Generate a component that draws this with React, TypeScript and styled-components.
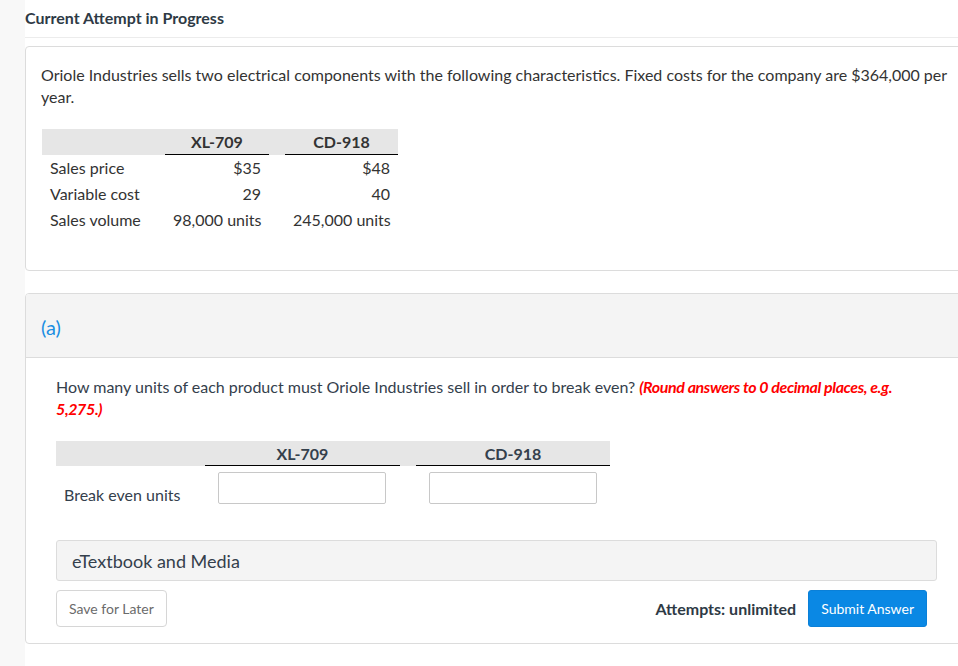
import React from 'react';
import styled, {createGlobalStyle} from 'styled-components';

const GlobalStyle = createGlobalStyle`
  html, body {
    margin: 0;
    padding: 0;
    background: #ffffff;
    overflow: hidden;
  }
  body {
    font-family: 'Lato', 'Liberation Sans', sans-serif;
    color: #333;
  }
`

const Page = styled.div`
  display: flex;
  width: 958px;
  height: 666px;
  overflow: hidden;
`

const Gutter = styled.div`
  flex: 0 0 25px;
  background: #f8f8f8;
`

const Main = styled.main`
  flex: 0 0 943px;
  display: flex;
  flex-direction: column;
`

const Title = styled.h2`
  margin: 0;
  font-size: 16px;
  font-weight: 700;
  color: #2e3a45;
  line-height: 20px;
  padding: 8px 0 9px;
  border-bottom: 1px solid #ececec;
`

const Card = styled.section<{ $top: number }>`
  margin-top: ${p => p.$top}px;
  border: 1px solid #dcdcdc;
  border-radius: 4px;
  background: #fff;
  overflow: hidden;
`

const IntroBody = styled.div`
  padding: 17px 15px 37px 15px;
`

const Paragraph = styled.p<{ $color?: string }>`
  margin: 0;
  font-size: 16px;
  line-height: 22px;
  color: ${p => p.$color || '#333'};
`

const Note = styled.span`
  color: #ff0000;
  font-weight: 700;
  font-style: italic;
  letter-spacing: -0.4px;
`

const DataGrid = styled.div`
  display: grid;
  grid-template-columns: 123px 104px 16px 113px;
  margin: 21px 0 0 1px;
  font-size: 16px;
  color: #333;
`

const HeadCell = styled.div<{ $line?: boolean }>`
  background: #e6e6e6;
  height: 26px;
  line-height: 26px;
  text-align: center;
  font-weight: 700;
  box-sizing: border-box;
  border-bottom: 1px solid ${p => (p.$line ? '#000' : 'transparent')};
`

const Cell = styled.div<{ $align?: string }>`
  height: 26px;
  line-height: 26px;
  padding: 0 8px;
  text-align: ${p => p.$align || 'left'};
  white-space: nowrap;
`

const PartHeader = styled.div`
  background: #f4f4f4;
  height: 64px;
  border-bottom: 1px solid #dcdcdc;
  display: flex;
  align-items: center;
  padding-left: 15px;
  padding-top: 2px;
  box-sizing: border-box;
`

const PartLabel = styled.span`
  font-size: 20px;
  color: #1a8ee2;
`

const PartBody = styled.div`
  padding: 18px 30px 16px 30px;
`

const AnswerGrid = styled.div`
  display: grid;
  grid-template-columns: 149px 195px 16px 194px;
  margin-top: 21px;
  font-size: 16px;
  color: #34404c;
`

const AnswerHead = styled(HeadCell)`
  height: 25px;
  line-height: 25px;
  color: #34404c;
`

const LabelCell = styled.div`
  padding: 19px 8px 0;
  font-size: 16px;
  line-height: 20px;
  height: 40px;
  box-sizing: border-box;
`

const InputCell = styled.div`
  padding: 6px 13px 0;
`

const AnswerInput = styled.input`
  display: block;
  width: 168px;
  height: 32px;
  box-sizing: border-box;
  border: 1px solid #c8c8c8;
  border-radius: 2px;
  font-family: inherit;
  font-size: 15px;
`

const MediaBar = styled.div`
  margin-top: 34px;
  height: 41px;
  box-sizing: border-box;
  background: #f4f4f4;
  border: 1px solid #dcdcdc;
  border-radius: 3px;
  display: flex;
  align-items: center;
  padding-left: 15px;
  font-size: 18px;
  color: #34404c;
`

const Footer = styled.div`
  margin-top: 9px;
  display: flex;
  align-items: center;
  padding-right: 10px;
`

const GhostButton = styled.button`
  height: 37px;
  padding: 0 12px;
  background: #fff;
  border: 1px solid #d6d6d6;
  border-radius: 4px;
  font-family: inherit;
  font-size: 14px;
  color: #6b6b6b;
`

const Attempts = styled.span`
  margin-left: auto;
  margin-right: 12px;
  font-size: 16px;
  font-weight: 700;
  color: #2e3a45;
`

const PrimaryButton = styled.button`
  height: 37px;
  padding: 0 12px;
  background: #0a88e4;
  border: 1px solid #0a80d8;
  border-radius: 3px;
  font-family: inherit;
  font-size: 14px;
  color: #fff;
`

export default function App() {
    return (
        <>
            <GlobalStyle/>
            <Page>
                <Gutter/>
                <Main>
                    <Title>Current Attempt in Progress</Title>

                    <Card $top={8}>
                        <IntroBody>
                            <Paragraph>
                                Oriole Industries sells two electrical components with the following characteristics. Fixed costs for the company are $364,000 per year.
                            </Paragraph>
                            <DataGrid>
                                <HeadCell/>
                                <HeadCell $line>XL-709</HeadCell>
                                <HeadCell/>
                                <HeadCell $line>CD-918</HeadCell>

                                <Cell>Sales price</Cell>
                                <Cell $align="right">$35</Cell>
                                <div/>
                                <Cell $align="right">$48</Cell>

                                <Cell>Variable cost</Cell>
                                <Cell $align="right">29</Cell>
                                <div/>
                                <Cell $align="right">40</Cell>

                                <Cell>Sales volume</Cell>
                                <Cell $align="right">98,000 units</Cell>
                                <div/>
                                <Cell $align="right">245,000 units</Cell>
                            </DataGrid>
                        </IntroBody>
                    </Card>

                    <Card $top={22}>
                        <PartHeader>
                            <PartLabel>(a)</PartLabel>
                        </PartHeader>
                        <PartBody>
                            <Paragraph $color="#34404c">
                                How many units of each product must Oriole Industries sell in order to break even?{' '}
                                <Note>(Round answers to 0 decimal places, e.g. 5,275.)</Note>
                            </Paragraph>
                            <AnswerGrid>
                                <AnswerHead/>
                                <AnswerHead $line>XL-709</AnswerHead>
                                <AnswerHead/>
                                <AnswerHead $line>CD-918</AnswerHead>

                                <LabelCell>Break even units</LabelCell>
                                <InputCell><AnswerInput type="text"/></InputCell>
                                <div/>
                                <InputCell><AnswerInput type="text"/></InputCell>
                            </AnswerGrid>

                            <MediaBar>eTextbook and Media</MediaBar>

                            <Footer>
                                <GhostButton>Save for Later</GhostButton>
                                <Attempts>Attempts: unlimited</Attempts>
                                <PrimaryButton>Submit Answer</PrimaryButton>
                            </Footer>
                        </PartBody>
                    </Card>
                </Main>
            </Page>
        </>
    );
}
